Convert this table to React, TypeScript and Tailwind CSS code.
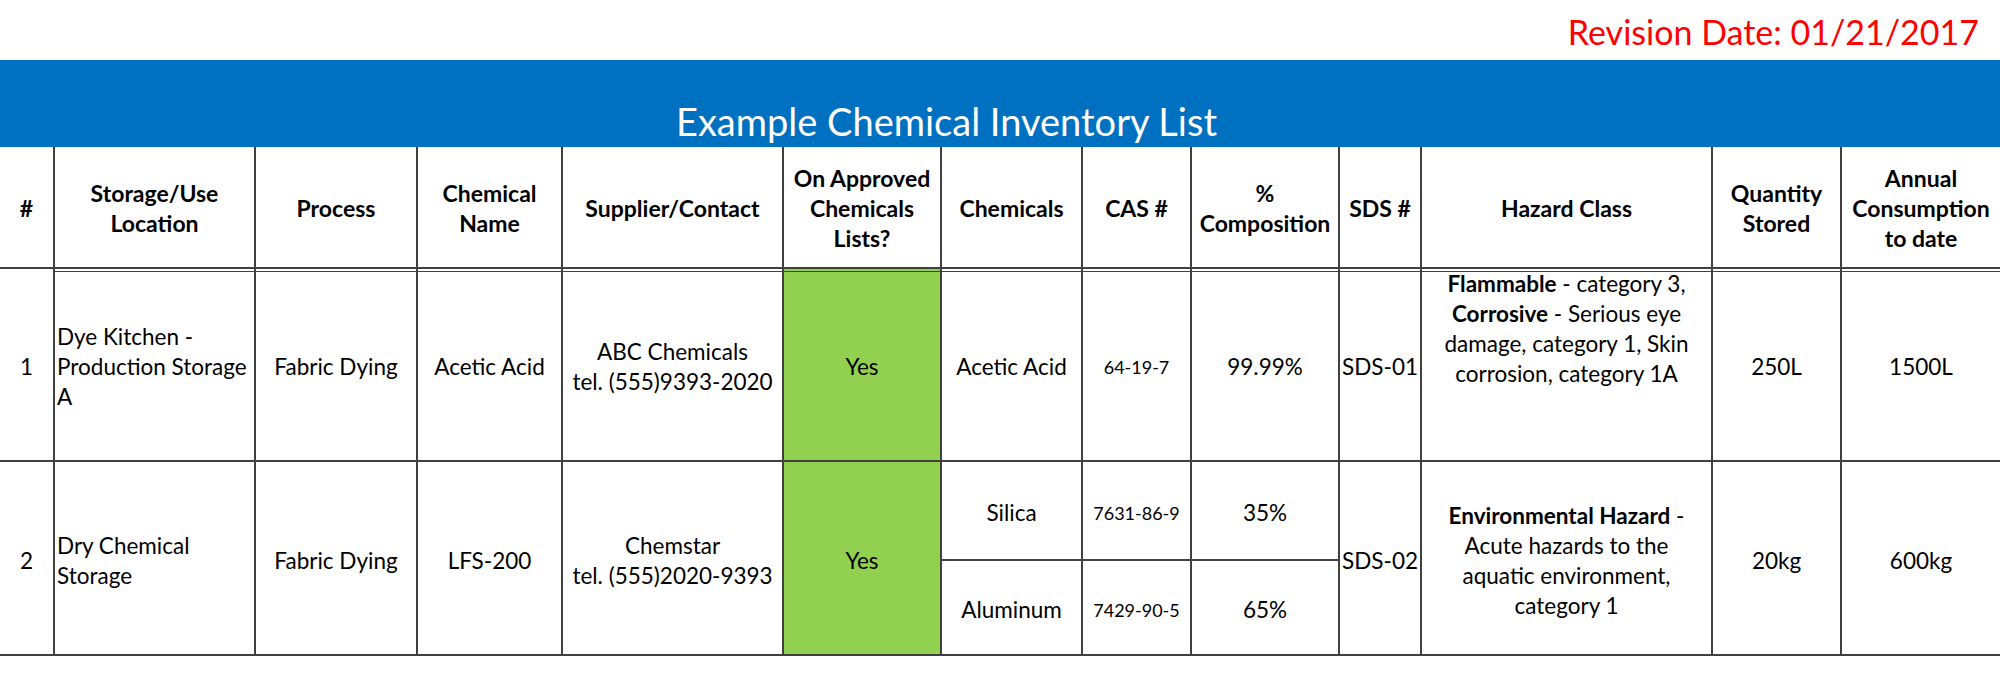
import React from "react";

const cell = "border-2 border-[#404040] p-0 pt-[5px] text-center align-middle";
const hcell = "border-2 border-t-0 border-[#404040] p-0 pt-[2px] text-center align-middle font-bold text-[23px]";
const dbl = " shadow-[inset_0_2px_0_#ffffff,inset_0_3px_0_#404040]";
const dblGreen = " shadow-[inset_0_2px_0_#92d050,inset_0_3px_0_#404040]";

function Lines({ lines }: { lines: React.ReactNode[] }) {
  return (
    <div className="whitespace-nowrap">
      {lines.map((l, i) => (
        <div key={i}>{l}</div>
      ))}
    </div>
  );
}

export default function App() {
  const widths = [
    "w-[54px]",
    "w-[201px]",
    "w-[162px]",
    "w-[145px]",
    "w-[221px]",
    "w-[158px]",
    "w-[141px]",
    "w-[109px]",
    "w-[148px]",
    "w-[82px]",
    "w-[291px]",
    "w-[129px]",
    "w-[159px]",
  ];
  return (
    <div className="w-[2000px] h-[676px] bg-white text-black font-['Lato','Open_Sans',sans-serif] overflow-hidden">
      <div className="h-[60px] flex justify-end items-start pr-[21px] pt-[15px]">
        <span className="text-[34px] leading-none text-[#ff0000]">Revision Date: 01/21/2017</span>
      </div>
      <div className="h-[87px] bg-[#0070c0] pl-[676px] pt-[42px]">
        <span className="block text-[38px] leading-none text-white whitespace-nowrap">Example Chemical Inventory List</span>
      </div>
      <table className="border-collapse table-fixed w-[2000px] text-[22.5px] leading-[30px]">
        <colgroup>
          {widths.map((w, i) => (
            <col key={i} className={w} />
          ))}
        </colgroup>
        <thead>
          <tr className="h-[121px]">
            <th className={hcell + " border-l-0"}>#</th>
            <th className={hcell}><Lines lines={["Storage/Use", "Location"]} /></th>
            <th className={hcell}>Process</th>
            <th className={hcell}><Lines lines={["Chemical", "Name"]} /></th>
            <th className={hcell}>Supplier/Contact</th>
            <th className={hcell}><Lines lines={["On Approved", "Chemicals", "Lists?"]} /></th>
            <th className={hcell}>Chemicals</th>
            <th className={hcell}>CAS #</th>
            <th className={hcell}><Lines lines={["%", "Composition"]} /></th>
            <th className={hcell}>SDS #</th>
            <th className={hcell}>Hazard Class</th>
            <th className={hcell}><Lines lines={["Quantity", "Stored"]} /></th>
            <th className={hcell + " border-r-0"}><Lines lines={["Annual", "Consumption", "to date"]} /></th>
          </tr>
        </thead>
        <tbody>
          <tr className="h-[193px]">
            <td className={cell + " border-l-0"}>1</td>
            <td className={cell + dbl + " text-left pl-[2px]"}><Lines lines={["Dye Kitchen -", "Production Storage", "A"]} /></td>
            <td className={cell + dbl}>Fabric Dying</td>
            <td className={cell + dbl}>Acetic Acid</td>
            <td className={cell + dbl}><Lines lines={["ABC Chemicals", "tel. (555)9393-2020"]} /></td>
            <td className={cell + dblGreen + " bg-[#92d050]"}>Yes</td>
            <td className={cell + dbl}>Acetic Acid</td>
            <td className={cell + dbl + " text-[18px]"}>64-19-7</td>
            <td className={cell + dbl}>99.99%</td>
            <td className={cell + dbl}>SDS-01</td>
            <td className={cell + dbl + " align-top !pt-0"}>
              <Lines
                lines={[
                  <><span className="font-bold">Flammable</span> - category 3,</>,
                  <><span className="font-bold">Corrosive</span> - Serious eye</>,
                  "damage, category 1, Skin",
                  "corrosion, category 1A",
                ]}
              />
            </td>
            <td className={cell + dbl}>250L</td>
            <td className={cell + dbl + " border-r-0"}>1500L</td>
          </tr>
          <tr className="h-[99px]">
            <td rowSpan={2} className={cell + " border-l-0"}>2</td>
            <td rowSpan={2} className={cell + " text-left pl-[2px]"}><Lines lines={["Dry Chemical", "Storage"]} /></td>
            <td rowSpan={2} className={cell}>Fabric Dying</td>
            <td rowSpan={2} className={cell}>LFS-200</td>
            <td rowSpan={2} className={cell}><Lines lines={["Chemstar", "tel. (555)2020-9393"]} /></td>
            <td rowSpan={2} className={cell + " bg-[#92d050]"}>Yes</td>
            <td className={cell}>Silica</td>
            <td className={cell + " text-[18px]"}>7631-86-9</td>
            <td className={cell}>35%</td>
            <td rowSpan={2} className={cell}>SDS-02</td>
            <td rowSpan={2} className={cell}>
              <Lines
                lines={[
                  <><span className="font-bold">Environmental Hazard</span> -</>,
                  "Acute hazards to the",
                  "aquatic environment,",
                  "category 1",
                ]}
              />
            </td>
            <td rowSpan={2} className={cell}>20kg</td>
            <td rowSpan={2} className={cell + " border-r-0"}>600kg</td>
          </tr>
          <tr className="h-[95px]">
            <td className={cell}>Aluminum</td>
            <td className={cell + " text-[18px]"}>7429-90-5</td>
            <td className={cell}>65%</td>
          </tr>
        </tbody>
      </table>
    </div>
  );
}
